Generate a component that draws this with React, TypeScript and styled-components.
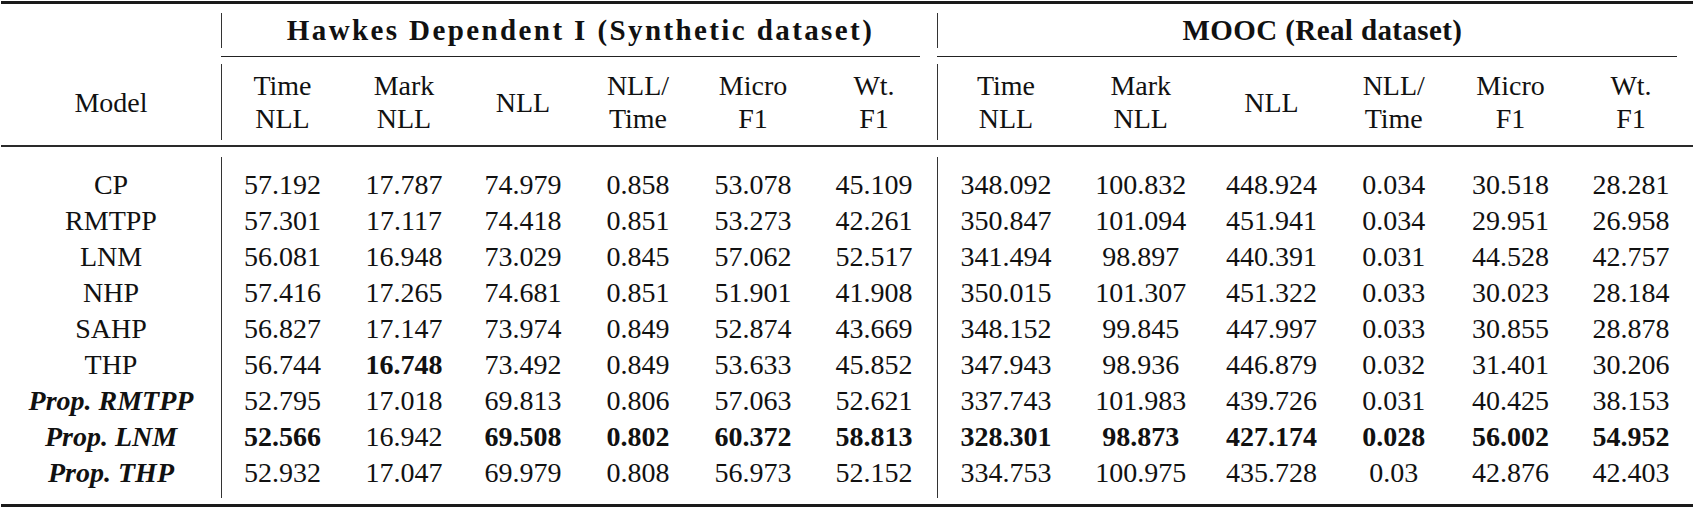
import React from "react";
import styled, { createGlobalStyle, css } from "styled-components";

const SERIF = `"Liberation Serif", "DejaVu Serif", serif`;

const GlobalStyle = createGlobalStyle`
  html, body {
    margin: 0;
    padding: 0;
    background: #ffffff;
  }
  body {
    font-family: ${SERIF};
    color: #111111;
  }
`;

// column widths, read off the reference (model | 6 synthetic | 6 real)
const COLS =
  "220px 122px 122px 116px 114px 116px 126px 137px 133.5px 128px 116.5px 117px 124px";
const GROUP_COLS = "220px 716px 756px";

const Wrapper = styled.div`
  padding: 1px 3px 0 1px;
  width: 1692px;
  font-family: ${SERIF};
  font-weight: 400;
`;

const Table = styled.div`
  border-top: 3px solid #1a1a1a;
  border-bottom: 3px solid #1a1a1a;
`;

const GroupRow = styled.div`
  display: grid;
  grid-template-columns: ${GROUP_COLS};
  padding: 9px 0 8px;
`;

const GroupTitle = styled.div<{ $spacing: number; $shift: number }>(
  ({ $spacing, $shift }) => css`
    height: 35px;
    line-height: 35px;
    text-align: center;
    white-space: nowrap;
    font-size: 29px;
    font-weight: 700;
    letter-spacing: ${$spacing}px;
    padding-left: ${$shift}px;
    box-sizing: border-box;
    border-left: 1px solid #333;
  `
);

const CmidRow = styled.div`
  display: grid;
  grid-template-columns: ${GROUP_COLS};
  height: 1px;
`;

const Cmid = styled.div<{ $trim?: number }>(
  ({ $trim }) => css`
    height: 1px;
    background: #222;
    margin-right: ${$trim || 0}px;
  `
);

const SubHeadRow = styled.div`
  display: grid;
  grid-template-columns: ${COLS};
  padding: 7px 0 5px;
`;

const HeadCell = styled.div<{ $divider?: boolean }>(
  ({ $divider }) => css`
    height: 76px;
    display: flex;
    flex-direction: column;
    align-items: center;
    justify-content: center;
    font-size: 28px;
    line-height: 33px;
    box-sizing: border-box;
    border-left: ${$divider ? "1px solid #333" : "none"};
  `
);

const MidRule = styled.div`
  height: 2px;
  background: #2a2a2a;
`;

const Body = styled.div`
  display: grid;
  grid-template-columns: ${COLS};
  padding: 10px 0 6px;
`;

type Edge = "first" | "last" | undefined;

const edgePad = (edge: Edge) =>
  edge === "first"
    ? "padding-top: 10px;"
    : edge === "last"
    ? "padding-bottom: 7px;"
    : "";

const ModelCell = styled.div<{ $proposed?: boolean; $edge?: Edge }>(
  ({ $proposed, $edge }) => css`
    text-align: center;
    font-size: 28px;
    line-height: 36px;
    white-space: nowrap;
    font-weight: ${$proposed ? 700 : 400};
    font-style: ${$proposed ? "italic" : "normal"};
    ${edgePad($edge)}
  `
);

const Cell = styled.div<{ $divider?: boolean; $bold?: boolean; $edge?: Edge }>(
  ({ $divider, $bold, $edge }) => css`
    text-align: center;
    font-size: 28px;
    line-height: 36px;
    white-space: nowrap;
    font-weight: ${$bold ? 700 : 400};
    box-sizing: border-box;
    border-left: ${$divider ? "1px solid #333" : "none"};
    ${edgePad($edge)}
  `
);

const metricHeads: string[][] = [
  ["Time", "NLL"],
  ["Mark", "NLL"],
  ["NLL"],
  ["NLL/", "Time"],
  ["Micro", "F1"],
  ["Wt.", "F1"],
];

interface Row {
  model: string;
  proposed?: boolean;
  values: string[];
  bold?: number[];
}

const rows: Row[] = [
  {
    model: "CP",
    values: ["57.192", "17.787", "74.979", "0.858", "53.078", "45.109", "348.092", "100.832", "448.924", "0.034", "30.518", "28.281"],
  },
  {
    model: "RMTPP",
    values: ["57.301", "17.117", "74.418", "0.851", "53.273", "42.261", "350.847", "101.094", "451.941", "0.034", "29.951", "26.958"],
  },
  {
    model: "LNM",
    values: ["56.081", "16.948", "73.029", "0.845", "57.062", "52.517", "341.494", "98.897", "440.391", "0.031", "44.528", "42.757"],
  },
  {
    model: "NHP",
    values: ["57.416", "17.265", "74.681", "0.851", "51.901", "41.908", "350.015", "101.307", "451.322", "0.033", "30.023", "28.184"],
  },
  {
    model: "SAHP",
    values: ["56.827", "17.147", "73.974", "0.849", "52.874", "43.669", "348.152", "99.845", "447.997", "0.033", "30.855", "28.878"],
  },
  {
    model: "THP",
    values: ["56.744", "16.748", "73.492", "0.849", "53.633", "45.852", "347.943", "98.936", "446.879", "0.032", "31.401", "30.206"],
    bold: [1],
  },
  {
    model: "Prop. RMTPP",
    proposed: true,
    values: ["52.795", "17.018", "69.813", "0.806", "57.063", "52.621", "337.743", "101.983", "439.726", "0.031", "40.425", "38.153"],
  },
  {
    model: "Prop. LNM",
    proposed: true,
    values: ["52.566", "16.942", "69.508", "0.802", "60.372", "58.813", "328.301", "98.873", "427.174", "0.028", "56.002", "54.952"],
    bold: [0, 2, 3, 4, 5, 6, 7, 8, 9, 10, 11],
  },
  {
    model: "Prop. THP",
    proposed: true,
    values: ["52.932", "17.047", "69.979", "0.808", "56.973", "52.152", "334.753", "100.975", "435.728", "0.03", "42.876", "42.403"],
  },
];

const App = () => {
  return (
    <Wrapper>
      <GlobalStyle />
      <Table>
        <GroupRow>
          <div />
          <GroupTitle $spacing={2.4} $shift={2}>
            Hawkes Dependent I (Synthetic dataset)
          </GroupTitle>
          <GroupTitle $spacing={0.4} $shift={14}>
            MOOC (Real dataset)
          </GroupTitle>
        </GroupRow>
        <CmidRow>
          <div />
          <Cmid $trim={17} />
          <Cmid $trim={16} />
        </CmidRow>
        <SubHeadRow>
          <HeadCell>Model</HeadCell>
          {[0, 1].map((g) =>
            metricHeads.map((h, i) => (
              <HeadCell key={`${g}-${i}`} $divider={i === 0}>
                {h.map((line) => (
                  <span key={line}>{line}</span>
                ))}
              </HeadCell>
            ))
          )}
        </SubHeadRow>
        <MidRule />
        <Body>
          {rows.map((r, ri) => {
            const edge: Edge =
              ri === 0 ? "first" : ri === rows.length - 1 ? "last" : undefined;
            return (
              <React.Fragment key={r.model}>
                <ModelCell $proposed={r.proposed} $edge={edge}>
                  {r.model}
                </ModelCell>
                {r.values.map((v, i) => (
                  <Cell
                    key={i}
                    $divider={i === 0 || i === 6}
                    $bold={r.bold?.includes(i)}
                    $edge={edge}
                  >
                    {v}
                  </Cell>
                ))}
              </React.Fragment>
            );
          })}
        </Body>
      </Table>
    </Wrapper>
  );
};

export default App;
